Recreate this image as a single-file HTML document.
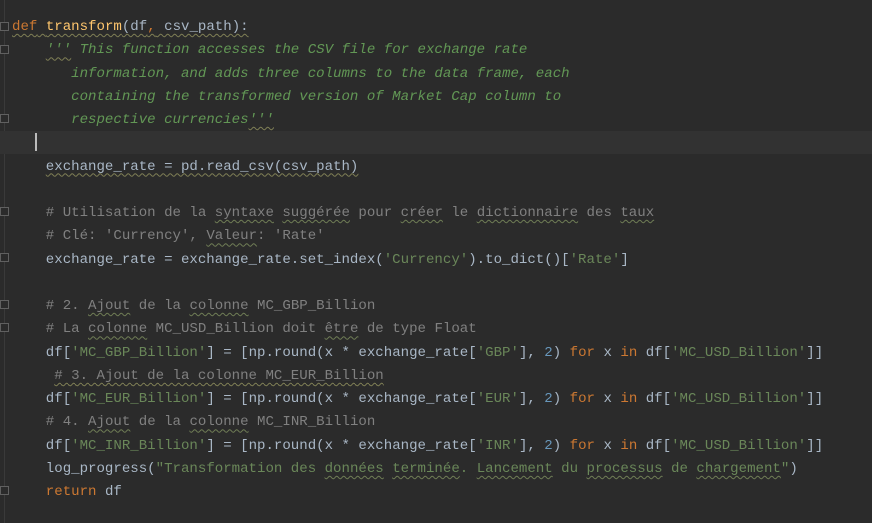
<!DOCTYPE html>
<html><head><meta charset="utf-8"><style>
body{margin:0;width:872px;height:523px;background:#2b2b2b;overflow:hidden;position:relative}
.gut{position:absolute;left:4px;top:0;width:1px;height:523px;background:#3a3a3a}
.hl{position:absolute;left:0;top:131px;width:872px;height:23px;background:#323232}
.cur{position:absolute;left:35px;top:133px;width:2px;height:18px;background:#bbb}
pre{position:absolute;left:12px;top:16px;margin:0;font-family:"Liberation Mono",monospace;font-size:14.08px;line-height:23.25px;color:#a9b7c6;white-space:pre}
.k{color:#cc7832}.f{color:#ffc66d}.c{color:#808080}.s{color:#6a8759}.d{color:#629755;font-style:italic}.n{color:#6897bb}
.w{text-decoration:underline wavy #6f7d55;text-decoration-thickness:1px;text-underline-offset:3px}
.y{text-decoration:underline wavy #7f7f55;text-decoration-thickness:1px;text-underline-offset:3px}
.fold{position:absolute;left:0;width:9px;height:9px;border:1px solid #606060;box-sizing:border-box;background:#2b2b2b}
</style></head><body>
<div class="gut"></div>
<div class="hl"></div>
<div class="cur"></div>
<div class="fold" style="top:22px"></div>
<div class="fold" style="top:45px"></div>
<div class="fold" style="top:114px"></div>
<div class="fold" style="top:207px"></div>
<div class="fold" style="top:253px"></div>
<div class="fold" style="top:300px"></div>
<div class="fold" style="top:323px"></div>
<div class="fold" style="top:486px"></div>
<pre><span class="y"><span class="k">def</span> <span class="f">transform</span>(df<span class="k">,</span> csv_path):</span>
    <span class="d"><span class="y">'''</span> This function accesses the CSV file for exchange rate
       information, and adds three columns to the data frame, each
       containing the transformed version of Market Cap column to
       respective currencies<span class="y">'''</span></span>

    <span class="y">exchange_rate = pd.read_csv(csv_path)</span>

    <span class="c"># Utilisation de la <span class="w">syntaxe</span> <span class="w">suggérée</span> pour <span class="w">créer</span> le <span class="w">dictionnaire</span> des <span class="w">taux</span></span>
    <span class="c"># Clé: 'Currency', <span class="w">Valeur</span>: 'Rate'</span>
    exchange_rate = exchange_rate.set_index(<span class="s">'Currency'</span>).to_dict()[<span class="s">'Rate'</span>]

    <span class="c"># 2. <span class="w">Ajout</span> de la <span class="w">colonne</span> MC_GBP_Billion</span>
    <span class="c"># La <span class="w">colonne</span> MC_USD_Billion doit <span class="w">être</span> de type Float</span>
    df[<span class="s">'MC_GBP_Billion'</span>] = [np.round(x * exchange_rate[<span class="s">'GBP'</span>], <span class="n">2</span>) <span class="k">for</span> x <span class="k">in</span> df[<span class="s">'MC_USD_Billion'</span>]]
     <span class="c y"># 3. Ajout de la colonne MC_EUR_Billion</span>
    df[<span class="s">'MC_EUR_Billion'</span>] = [np.round(x * exchange_rate[<span class="s">'EUR'</span>], <span class="n">2</span>) <span class="k">for</span> x <span class="k">in</span> df[<span class="s">'MC_USD_Billion'</span>]]
    <span class="c"># 4. <span class="w">Ajout</span> de la <span class="w">colonne</span> MC_INR_Billion</span>
    df[<span class="s">'MC_INR_Billion'</span>] = [np.round(x * exchange_rate[<span class="s">'INR'</span>], <span class="n">2</span>) <span class="k">for</span> x <span class="k">in</span> df[<span class="s">'MC_USD_Billion'</span>]]
    log_progress(<span class="s">"Transformation des <span class="w">données</span> <span class="w">terminée</span>. <span class="w">Lancement</span> du <span class="w">processus</span> de <span class="w">chargement</span>"</span>)
    <span class="k">return</span> df</pre>
</body></html>
